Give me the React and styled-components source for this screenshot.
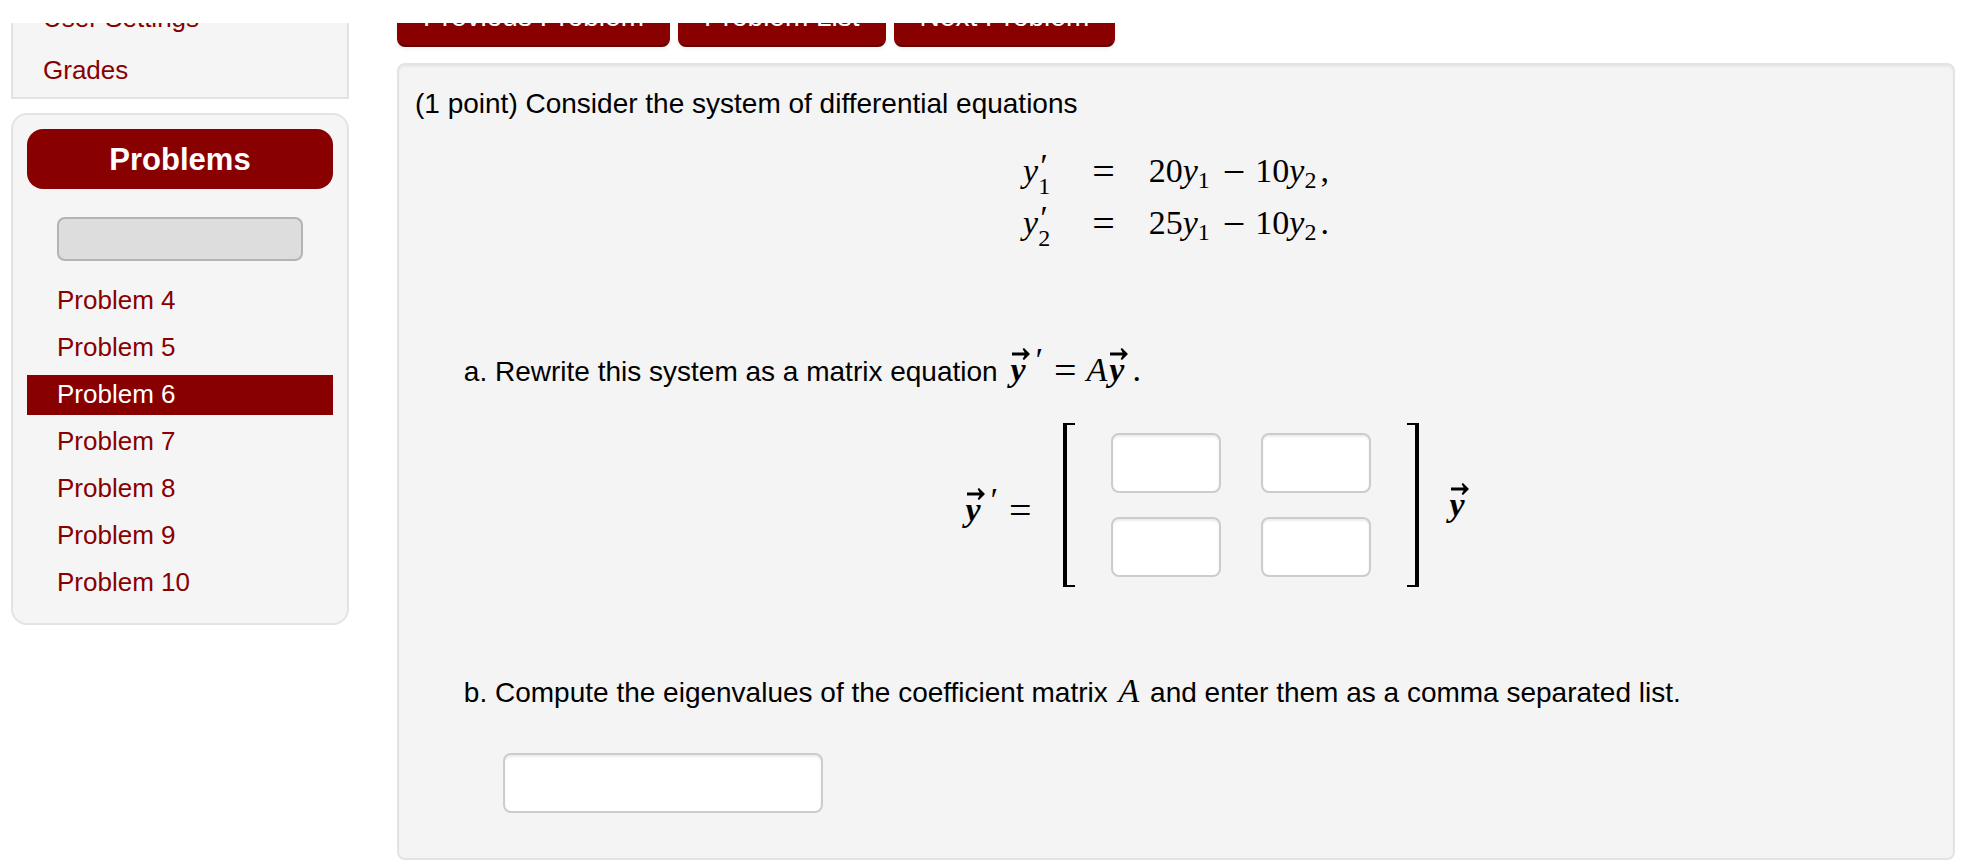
import React, { useState } from 'react';
import styled, { createGlobalStyle, css } from 'styled-components';

const siteLinks = ['User Settings', 'Grades'];
const problems = [4, 5, 6, 7, 8, 9, 10];
const entries = ['row 1 column 1', 'row 1 column 2', 'row 2 column 1', 'row 2 column 2'];

const Vector = () => (
  <VectorBox>
    <Arrow viewBox="0 0 18 12" aria-hidden="true">
      <path d="M0 4.5h12.6L10.6 1 12 0 18 6l-6 6-1.4-1 2-3.5H0z" />
    </Arrow>
    <b>y</b>
  </VectorBox>
);

const Scripted = ({ index }) => (
  <>
    <i>y</i>
    <Scripts>
      <i>′</i>
      <Sub>{index}</Sub>
    </Scripts>
  </>
);

const Equation = ({ index, first, end }) => (
  <tr>
    <td>
      <Scripted index={index} />
    </td>
    <td>
      <Operator>=</Operator>
    </td>
    <td>
      {first}
      <i>y</i>
      <Sub>1</Sub>
      <Operator $spaced>−</Operator>
      10<i>y</i>
      <Sub>2</Sub>
      <Stop>{end}</Stop>
    </td>
  </tr>
);

export default function App() {
  const [current, setCurrent] = useState(6);
  const [matrix, setMatrix] = useState(['', '', '', '']);
  const [eigenvalues, setEigenvalues] = useState('');

  const handleChangeEntry = (e, index) => {
    const { value } = e.currentTarget;
    setMatrix(prev => prev.map((item, i) => (i === index ? value : item)));
  };

  return (
    <Page>
      <GlobalStyle />
      <Viewport>
        <Columns>
          <Sidebar>
            <Panel as="nav" aria-label="Site">
              <SiteList>
                {siteLinks.map(name => (
                  <li key={name}>
                    <SideLink href="#">{name}</SideLink>
                  </li>
                ))}
              </SiteList>
            </Panel>
            <Panel $rounded>
              <PanelTitle>Problems</PanelTitle>
              <ProgressButton type="button" aria-label="Progress" />
              <ProblemList>
                {problems.map(number => (
                  <li key={number}>
                    <SideLink
                      href="#"
                      $active={number === current}
                      onClick={() => setCurrent(number)}
                    >
                      Problem {number}
                    </SideLink>
                  </li>
                ))}
              </ProblemList>
            </Panel>
          </Sidebar>

          <Main>
            <Toolbar>
              <NavButton type="button">Previous Problem</NavButton>
              <NavButton type="button">Problem List</NavButton>
              <NavButton type="button">Next Problem</NavButton>
            </Toolbar>

            <Card>
              <Text>(1 point) Consider the system of differential equations</Text>
              <Equations>
                <tbody>
                  <Equation index={1} first="20" end="," />
                  <Equation index={2} first="25" end="." />
                </tbody>
              </Equations>

              <Parts>
                <li>
                  <Text>
                    Rewrite this system as a matrix equation{' '}
                    <MathText>
                      <Vector />
                      <Prime>′</Prime>
                      <Operator $spaced>=</Operator>
                      <i>A</i>
                      <Vector />
                      <Stop>.</Stop>
                    </MathText>
                  </Text>
                  <MatrixRow>
                    <MathText>
                      <Vector />
                      <Prime>′</Prime>
                      <Operator $spaced>=</Operator>
                    </MathText>
                    <Matrix>
                      <Bracket />
                      <Cells>
                        {entries.map((name, i) => (
                          <Answer
                            key={name}
                            type="text"
                            aria-label={name}
                            value={matrix[i]}
                            onChange={e => handleChangeEntry(e, i)}
                          />
                        ))}
                      </Cells>
                      <Bracket $right />
                    </Matrix>
                    <MathText>
                      <Vector />
                    </MathText>
                  </MatrixRow>
                </li>
                <li>
                  <Text as="label" htmlFor="eigenvalues">
                    Compute the eigenvalues of the coefficient matrix{' '}
                    <MathText>
                      <i>A</i>
                    </MathText>{' '}
                    and enter them as a comma separated list.
                  </Text>
                  <WideAnswer
                    id="eigenvalues"
                    type="text"
                    value={eigenvalues}
                    onChange={e => setEigenvalues(e.currentTarget.value)}
                  />
                </li>
              </Parts>
            </Card>
          </Main>
        </Columns>
      </Viewport>
    </Page>
  );
}

const GlobalStyle = createGlobalStyle`
  * {
    box-sizing: border-box;
  }
  body {
    margin: 0;
    color: #000;
    background-color: #fff;
    font-family: 'Liberation Sans', Arial, sans-serif;
    font-size: 28px;
    line-height: 40px;
  }
`;

const Page = styled.div`
  padding: 23px 12px 0 11px;
`;

const Viewport = styled.div`
  overflow: hidden;
`;

/* content is scrolled a little way under the top edge */
const Columns = styled.div`
  display: flex;
  align-items: flex-start;
  gap: 48px;
  margin-top: -36px;
`;

const Sidebar = styled.aside`
  display: flex;
  flex-direction: column;
  flex: 0 0 338px;
  gap: 14px;
  padding-top: 2px;
  font-size: 26px;
`;

const Panel = styled.section`
  padding: 7px 0;
  border: 2px solid #e3e3e3;
  background-color: #f5f5f5;
  ${({ $rounded }) =>
    $rounded &&
    css`
      padding: 14px 14px 20px;
      border-radius: 16px;
    `}
`;

const PanelTitle = styled.h2`
  margin: 0;
  padding: 11px 10px 9px;
  border-radius: 16px;
  color: #fff;
  background-color: #880000;
  font-size: 31px;
  font-weight: bold;
  line-height: 40px;
  text-align: center;
`;

const ProgressButton = styled.button`
  display: block;
  width: calc(100% - 60px);
  height: 44px;
  margin: 28px 30px 20px;
  border: 2px solid #b3b3b3;
  border-radius: 8px;
  background-color: #ddd;
  cursor: pointer;
`;

const SiteList = styled.ul`
  display: flex;
  flex-direction: column;
  gap: 12px;
  margin: 0;
  padding: 0;
  list-style: none;
`;

const SideLink = styled.a`
  display: block;
  padding: 0 30px;
  color: ${({ $active }) => ($active ? '#fff' : '#880000')};
  background-color: ${({ $active }) => ($active ? '#880000' : 'transparent')};
  text-decoration: none;
`;

const ProblemList = styled(SiteList)`
  gap: 7px;
  ${SideLink} {
    padding-bottom: 2px;
    line-height: 38px;
  }
`;

const Main = styled.main`
  flex: 1;
  min-width: 0;
`;

const Toolbar = styled.div`
  display: flex;
  gap: 8px;
  margin-bottom: 16px;
`;

const NavButton = styled.button`
  padding: 8px 24px;
  border: 2px solid #880000;
  border-bottom-color: #660000;
  border-radius: 8px;
  color: #fff;
  background-color: #880000;
  box-shadow: 0 2px 4px rgba(0, 0, 0, 0.05);
  font: inherit;
  cursor: pointer;
`;

const Card = styled.article`
  padding: 19px 16px 45px;
  border: 2px solid #e3e3e3;
  border-radius: 8px;
  background-color: #f4f4f4;
  box-shadow: inset 0 2px 2px rgba(0, 0, 0, 0.05);
`;

const Text = styled.p`
  margin: 0;
`;

const mathFont = css`
  font-family: 'Liberation Serif', 'Times New Roman', serif;
  font-size: 34px;
`;

const MathText = styled.span`
  ${mathFont}
  margin: 0 3px;
  line-height: 0;
  white-space: nowrap;
`;

const Equations = styled.table`
  ${mathFont}
  margin: 21px auto 103px;
  border-collapse: collapse;
  line-height: 52px;
  white-space: nowrap;
  td {
    padding: 0;
  }
  td:nth-child(2) {
    padding: 0 34px 0 42px;
  }
`;

const Operator = styled.span`
  margin: ${({ $spaced }) => ($spaced ? '0 10px 0 13px' : '0')};
  font-size: 40px;
  line-height: 0;
  vertical-align: -3px;
`;

const Sub = styled.sub`
  font-size: 24px;
  line-height: 0;
  vertical-align: -6px;
`;

const Scripts = styled.span`
  display: inline-flex;
  flex-direction: column;
  line-height: 24px;
  vertical-align: middle;
  ${Sub} {
    line-height: 16px;
  }
`;

const Stop = styled.span`
  margin-left: 4px;
`;

const Prime = styled.i`
  margin-left: 4px;
  vertical-align: 10px;
`;

const VectorBox = styled.span`
  position: relative;
  display: inline-block;
  padding: 0 4px 0 2px;
  font-style: italic;
  line-height: 0;
`;

const Arrow = styled.svg`
  position: absolute;
  right: 0;
  bottom: 10px;
  width: 18px;
  height: 12px;
`;

const Parts = styled.ol`
  display: flex;
  flex-direction: column;
  gap: 86px;
  margin: 0;
  padding-left: 80px;
  list-style-type: lower-alpha;
`;

const MatrixRow = styled.div`
  display: flex;
  justify-content: center;
  align-items: center;
  gap: 18px;
  margin-top: 31px;
`;

const Matrix = styled.div`
  display: flex;
  gap: 36px;
  margin-right: 8px;
`;

const Bracket = styled.span`
  width: 12px;
  border: solid #000;
  border-width: ${({ $right }) => ($right ? '2px 4px 2px 0' : '2px 0 2px 4px')};
`;

const Cells = styled.div`
  display: grid;
  grid-template-columns: repeat(2, 110px);
  gap: 24px 40px;
  padding: 10px 0;
`;

const Answer = styled.input`
  display: block;
  width: 100%;
  height: 60px;
  padding: 8px 12px;
  border: 2px solid #ccc;
  border-radius: 8px;
  background-color: #fff;
  box-shadow: inset 0 2px 2px rgba(0, 0, 0, 0.075);
  font: inherit;
`;

const WideAnswer = styled(Answer)`
  width: 320px;
  margin: 40px 8px 0;
`;
